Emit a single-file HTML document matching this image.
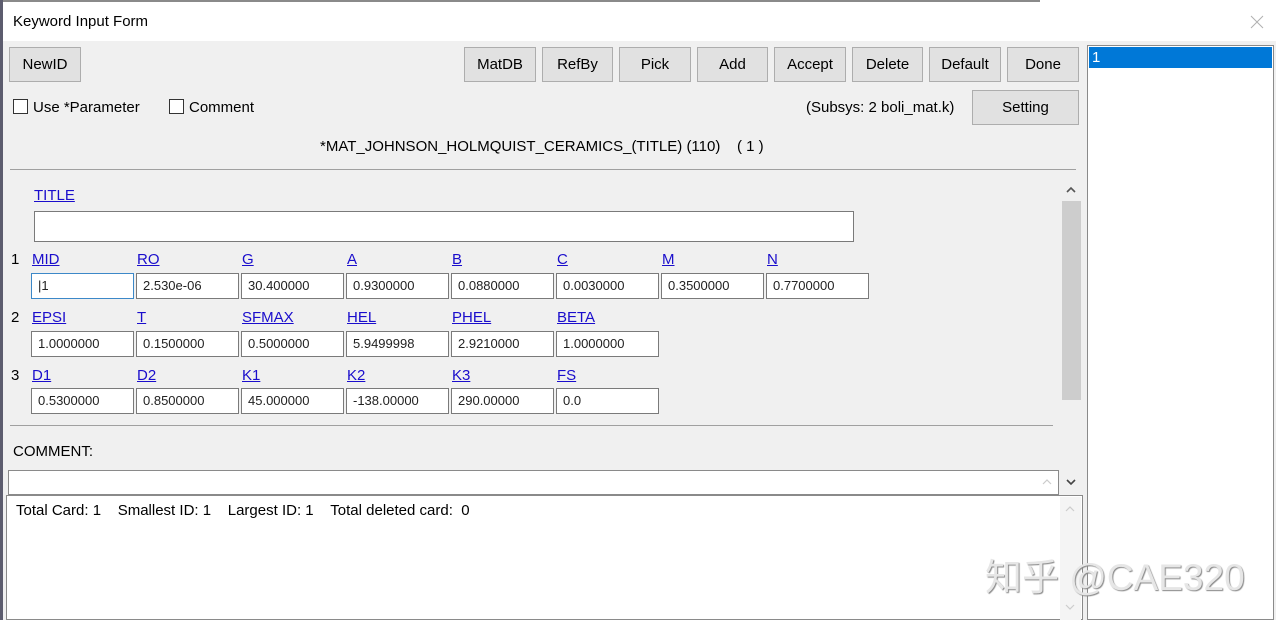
<!DOCTYPE html>
<html><head><meta charset="utf-8"><style>
*{box-sizing:border-box;margin:0;padding:0}
body{width:1276px;height:620px;position:relative;overflow:hidden;background:#f0f0f0;font-family:"Liberation Sans","Noto Sans CJK SC",sans-serif;font-size:15px;color:#000}
.a{position:absolute}
.btn{position:absolute;top:47px;height:35px;background:#e1e1e1;border:1px solid #adadad;text-align:center;line-height:33px;font-size:15px}
.lbl{position:absolute;color:#1a0dcc;text-decoration:underline;font-size:15px}
.in{position:absolute;height:26px;width:103px;background:#fff;border:1px solid #7a7a7a;font-size:13px;line-height:24px;padding-left:6px;color:#222}
.num{position:absolute;left:11px;font-size:15px}
.cb{position:absolute;top:99px;width:15px;height:15px;border:1px solid #333;background:#fff}
</style></head><body>
<div class="a" style="left:0;top:0;width:1276px;height:41px;background:#fff"></div>
<div class="a" style="left:0;top:0;width:1040px;height:2px;background:#8a8a8a"></div>
<div class="a" style="left:0;top:0;width:3px;height:620px;background:#5c5c6e"></div>
<div class="a" style="left:13px;top:13px;font-size:15px">Keyword Input Form</div>
<svg class="a" style="left:1250px;top:15px" width="14" height="14"><path d="M1 1L13 13M13 1L1 13" stroke="#b0b0b0" stroke-width="1"/></svg>

<div class="btn" style="left:9px;width:72px">NewID</div>
<div class="btn" style="left:464px;width:72px">MatDB</div>
<div class="btn" style="left:542px;width:71px">RefBy</div>
<div class="btn" style="left:619px;width:72px">Pick</div>
<div class="btn" style="left:697px;width:71px">Add</div>
<div class="btn" style="left:774px;width:72px">Accept</div>
<div class="btn" style="left:852px;width:71px">Delete</div>
<div class="btn" style="left:929px;width:72px">Default</div>
<div class="btn" style="left:1007px;width:72px">Done</div>
<div class="btn" style="left:972px;top:90px;width:107px">Setting</div>

<div class="cb" style="left:13px"></div><div class="a" style="left:33px;top:99px">Use *Parameter</div>
<div class="cb" style="left:169px"></div><div class="a" style="left:189px;top:99px">Comment</div>
<div class="a" style="left:806px;top:99px">(Subsys: 2 boli_mat.k)</div>
<div class="a" style="left:320px;top:138px">*MAT_JOHNSON_HOLMQUIST_CERAMICS_(TITLE) (110)&nbsp;&nbsp;&nbsp;&nbsp;( 1 )</div>
<div class="a" style="left:10px;top:169px;width:1066px;height:1px;background:#a0a0a0"></div>

<div class="a" style="left:1062px;top:180px;width:19px;height:310px;background:#f0f0f0"></div>
<svg class="a" style="left:1065px;top:186px" width="12" height="8"><path d="M2 6L6 2L10 6" stroke="#555" stroke-width="1.6" fill="none"/></svg>
<div class="a" style="left:1062px;top:201px;width:19px;height:199px;background:#cdcdcd"></div>
<svg class="a" style="left:1065px;top:478px" width="12" height="8"><path d="M2 2L6 6L10 2" stroke="#444" stroke-width="1.6" fill="none"/></svg>

<div class="lbl" style="left:34px;top:187px">TITLE</div>
<div class="in" style="left:34px;top:211px;width:820px;height:31px"></div>

<div class="num" style="top:251px">1</div>
<div class="lbl" style="left:32px;top:251px">MID</div><div class="lbl" style="left:137px;top:251px">RO</div><div class="lbl" style="left:242px;top:251px">G</div><div class="lbl" style="left:347px;top:251px">A</div><div class="lbl" style="left:452px;top:251px">B</div><div class="lbl" style="left:557px;top:251px">C</div><div class="lbl" style="left:662px;top:251px">M</div><div class="lbl" style="left:767px;top:251px">N</div>
<div class="in" style="left:31px;top:273px;border-color:#3c88c8">|1</div><div class="in" style="left:136px;top:273px">2.530e-06</div><div class="in" style="left:241px;top:273px">30.400000</div><div class="in" style="left:346px;top:273px">0.9300000</div><div class="in" style="left:451px;top:273px">0.0880000</div><div class="in" style="left:556px;top:273px">0.0030000</div><div class="in" style="left:661px;top:273px">0.3500000</div><div class="in" style="left:766px;top:273px">0.7700000</div>

<div class="num" style="top:309px">2</div>
<div class="lbl" style="left:32px;top:309px">EPSI</div><div class="lbl" style="left:137px;top:309px">T</div><div class="lbl" style="left:242px;top:309px">SFMAX</div><div class="lbl" style="left:347px;top:309px">HEL</div><div class="lbl" style="left:452px;top:309px">PHEL</div><div class="lbl" style="left:557px;top:309px">BETA</div>
<div class="in" style="left:31px;top:331px">1.0000000</div><div class="in" style="left:136px;top:331px">0.1500000</div><div class="in" style="left:241px;top:331px">0.5000000</div><div class="in" style="left:346px;top:331px">5.9499998</div><div class="in" style="left:451px;top:331px">2.9210000</div><div class="in" style="left:556px;top:331px">1.0000000</div>

<div class="num" style="top:367px">3</div>
<div class="lbl" style="left:32px;top:367px">D1</div><div class="lbl" style="left:137px;top:367px">D2</div><div class="lbl" style="left:242px;top:367px">K1</div><div class="lbl" style="left:347px;top:367px">K2</div><div class="lbl" style="left:452px;top:367px">K3</div><div class="lbl" style="left:557px;top:367px">FS</div>
<div class="in" style="left:31px;top:388px">0.5300000</div><div class="in" style="left:136px;top:388px">0.8500000</div><div class="in" style="left:241px;top:388px">45.000000</div><div class="in" style="left:346px;top:388px">-138.00000</div><div class="in" style="left:451px;top:388px">290.00000</div><div class="in" style="left:556px;top:388px">0.0</div>

<div class="a" style="left:10px;top:425px;width:1043px;height:1px;background:#a0a0a0"></div>
<div class="a" style="left:13px;top:443px">COMMENT:</div>
<div class="a" style="left:8px;top:470px;width:1051px;height:25px;background:#fff;border:1px solid #8a8a8a"></div>
<svg class="a" style="left:1041px;top:478px" width="12" height="8"><path d="M2 6L6 2L10 6" stroke="#ccc" stroke-width="1.2" fill="none"/></svg>

<div class="a" style="left:6px;top:495px;width:1077px;height:125px;background:#fff;border:1px solid #8a8a8a"></div>
<div class="a" style="left:1060px;top:497px;width:21px;height:123px;background:#f4f4f4"></div>
<svg class="a" style="left:1064px;top:505px" width="12" height="8"><path d="M2 6L6 2L10 6" stroke="#ccc" stroke-width="1.2" fill="none"/></svg>
<svg class="a" style="left:1064px;top:603px" width="12" height="8"><path d="M2 2L6 6L10 2" stroke="#ccc" stroke-width="1.2" fill="none"/></svg>
<div class="a" style="left:16px;top:502px">Total Card: 1&nbsp;&nbsp;&nbsp;&nbsp;Smallest ID: 1&nbsp;&nbsp;&nbsp;&nbsp;Largest ID: 1&nbsp;&nbsp;&nbsp;&nbsp;Total deleted card:&nbsp;&nbsp;0</div>

<div class="a" style="left:1087px;top:45px;width:187px;height:575px;background:#fff;border:1px solid #8a8a8a"></div>
<div class="a" style="left:1089px;top:47px;width:183px;height:21px;background:#0078d7;color:#fff;padding-left:3px;line-height:21px">1</div>

<div class="a" style="left:985px;top:547px;font-size:37px;color:#e6e6e6;text-shadow:1px 1px 1px #888;font-family:'Liberation Sans','Noto Sans CJK SC',sans-serif;white-space:nowrap">知乎 @CAE320</div>
</body></html>
